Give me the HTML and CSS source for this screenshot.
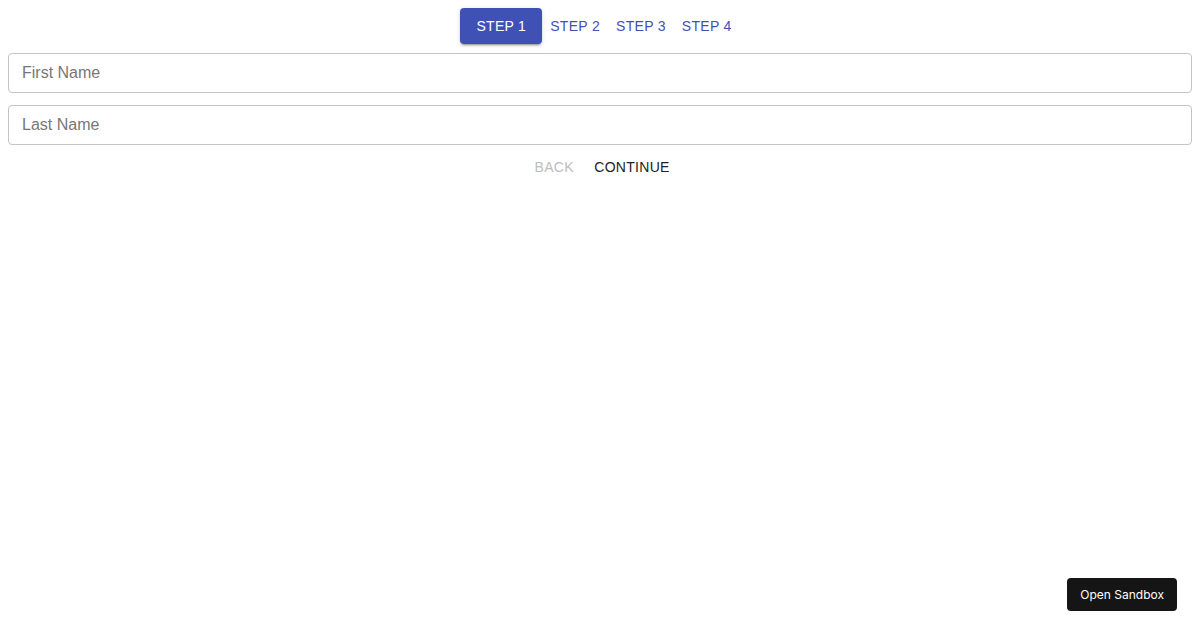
FILE: index.html
```html
<!DOCTYPE html>
<html>
<head>
<meta charset="utf-8">
<link rel="stylesheet" href="styles.css">
</head>
<body>
<div class="stepper">
  <button class="btn contained">STEP 1</button>
  <button class="btn text">STEP 2</button>
  <button class="btn text">STEP 3</button>
  <button class="btn text">STEP 4</button>
</div>
<div class="fields">
  <input class="field" type="text" placeholder="First Name">
  <input class="field" type="text" placeholder="Last Name">
</div>
<div class="actions">
  <button class="btn plain disabled">BACK</button>
  <button class="btn plain">CONTINUE</button>
</div>
<button class="sandbox">Open Sandbox</button>
</body>
</html>
```
FILE: styles.css
```css
html, body {
  margin: 0;
  padding: 0;
  background: #fff;
}
body {
  padding: 8px;
  font-family: "Liberation Sans", Arial, sans-serif;
}
.stepper {
  display: flex;
  justify-content: center;
  height: 36px;
}
.btn {
  font-family: "Liberation Sans", Arial, sans-serif;
  font-size: 14px;
  font-weight: 400;
  letter-spacing: 0.3px;
  line-height: 24px;
  border: none;
  background: transparent;
  padding: 6px 8px;
  min-width: 64px;
  border-radius: 4px;
  cursor: pointer;
  text-transform: uppercase;
}
.contained {
  background: #3f51b5;
  color: #fff;
  padding: 6px 16px;
  box-shadow: 0 3px 1px -2px rgba(0,0,0,0.2), 0 2px 2px 0 rgba(0,0,0,0.14), 0 1px 5px 0 rgba(0,0,0,0.12);
}
.text {
  color: #3f51b5;
}
.fields {
  display: flex;
  flex-direction: column;
  gap: 12px;
  margin-top: 9px;
}
.field {
  box-sizing: border-box;
  height: 40px;
  width: 100%;
  border: 1px solid #c4c4c4;
  border-radius: 4px;
  padding: 0 13px;
  font-family: "Liberation Sans", Arial, sans-serif;
  font-size: 16px;
  color: #222;
  outline: none;
}
.field::placeholder {
  color: #777;
}
.actions {
  display: flex;
  justify-content: center;
  margin-top: 4px;
}
.plain {
  color: #222;
}
.disabled {
  color: #bdbdbd;
}
.sandbox {
  position: fixed;
  right: 23px;
  bottom: 19px;
  height: 33px;
  padding: 0 13px;
  background: #151515;
  color: #fff;
  border: none;
  border-radius: 4px;
  font-family: Inter, "Liberation Sans", sans-serif;
  font-size: 12px;
}
```
